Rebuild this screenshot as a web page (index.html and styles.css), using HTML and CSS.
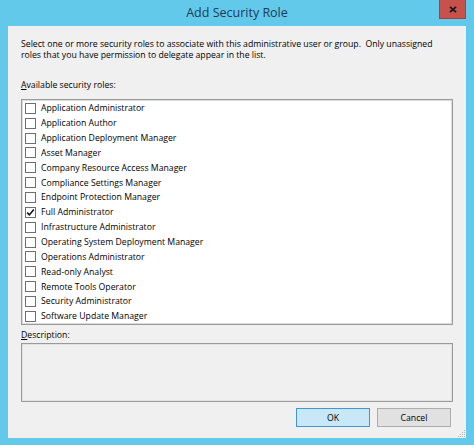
FILE: index.html
```html
<!DOCTYPE html>
<html>
<head>
<meta charset="utf-8">
<title>Add Security Role</title>
<link rel="stylesheet" href="styles.css">
</head>
<body>
<div class="window">
  <div class="titlebar">
    <span class="spacer"></span>
    <div class="title">Add Security Role</div>
    <div class="close-wrap">
      <button class="close" aria-label="Close">
        <svg width="8" height="7" viewBox="0 0 8 7"><path d="M1 0.8 L7 6.2 M7 0.8 L1 6.2" stroke="#1a1a1a" stroke-width="1.8" fill="none"/></svg>
      </button>
    </div>
  </div>
  <div class="client">
    <p class="intro">Select one or more security roles to associate with this administrative user or group.&nbsp; Only unassigned<br>roles that you have permission to delegate appear in the list.</p>
    <div class="label"><u>A</u>vailable security roles:</div>
    <ul class="list">
      <li class="item"><span class="cb"></span><span>Application Administrator</span></li>
      <li class="item"><span class="cb"></span><span>Application Author</span></li>
      <li class="item"><span class="cb"></span><span>Application Deployment Manager</span></li>
      <li class="item"><span class="cb"></span><span>Asset Manager</span></li>
      <li class="item"><span class="cb"></span><span>Company Resource Access Manager</span></li>
      <li class="item"><span class="cb"></span><span>Compliance Settings Manager</span></li>
      <li class="item"><span class="cb"></span><span>Endpoint Protection Manager</span></li>
      <li class="item"><span class="cb checked"><svg width="9" height="9" viewBox="0 0 9 9"><path d="M1.2 4.6 L3.4 6.9 L7.8 1.6" stroke="#111" stroke-width="1.6" fill="none"/></svg></span><span>Full Administrator</span></li>
      <li class="item"><span class="cb"></span><span>Infrastructure Administrator</span></li>
      <li class="item"><span class="cb"></span><span>Operating System Deployment Manager</span></li>
      <li class="item"><span class="cb"></span><span>Operations Administrator</span></li>
      <li class="item"><span class="cb"></span><span>Read-only Analyst</span></li>
      <li class="item"><span class="cb"></span><span>Remote Tools Operator</span></li>
      <li class="item"><span class="cb"></span><span>Security Administrator</span></li>
      <li class="item"><span class="cb"></span><span>Software Update Manager</span></li>
    </ul>
    <div class="label desc-label"><u>D</u>escription:</div>
    <div class="desc"></div>
    <div class="buttons">
      <button class="btn default">OK</button>
      <button class="btn">Cancel</button>
    </div>
    <svg class="grip" width="9" height="9" viewBox="0 0 9 9">
      <rect x="7" y="1" width="1" height="1" fill="#b8b8b8"/>
      <rect x="5" y="3" width="1" height="1" fill="#b8b8b8"/>
      <rect x="7" y="3" width="1" height="1" fill="#b8b8b8"/>
      <rect x="3" y="5" width="1" height="1" fill="#b8b8b8"/>
      <rect x="5" y="5" width="1" height="1" fill="#b8b8b8"/>
      <rect x="7" y="5" width="1" height="1" fill="#b8b8b8"/>
      <rect x="1" y="7" width="1" height="1" fill="#b8b8b8"/>
      <rect x="3" y="7" width="1" height="1" fill="#b8b8b8"/>
      <rect x="5" y="7" width="1" height="1" fill="#b8b8b8"/>
      <rect x="7" y="7" width="1" height="1" fill="#b8b8b8"/>
    </svg>
  </div>
</div>
</body>
</html>
```

FILE: styles.css
```css
* { box-sizing: border-box; }
html, body { margin: 0; padding: 0; }
body {
  width: 474px;
  height: 445px;
  overflow: hidden;
  font-family: "Open Sans", "Noto Sans", sans-serif;
}
.window {
  width: 474px;
  height: 445px;
  background: #62c9ea;
  padding: 0 8px 7px 8px;
  display: flex;
  flex-direction: column;
}
.titlebar {
  height: 26px;
  flex: none;
  display: grid;
  grid-template-columns: 1fr auto 1fr;
  align-items: start;
}
.title {
  font-size: 12.5px;
  line-height: 26px;
  color: #1d3b57;
  white-space: nowrap;
}
.close-wrap {
  justify-self: end;
}
.close {
  display: flex;
  align-items: center;
  justify-content: center;
  width: 27px;
  height: 19px;
  margin: 0;
  padding: 0;
  background: #c7514b;
  border: 1px solid #a3413c;
  border-top: none;
}
.client {
  flex: 1;
  position: relative;
  background: #f0f0f0;
  padding: 0 13px 0 13px;
  display: flex;
  flex-direction: column;
  font-size: 8.7px;
  color: #000;
}
.intro {
  margin: 13px 0 0 0;
  line-height: 10.5px;
  white-space: nowrap;
}
.label {
  margin-top: 19.5px;
  line-height: 11px;
}
.label u { text-decoration-thickness: 1px; text-underline-offset: 1px; }
.list {
  list-style: none;
  margin: 8.5px 0 0 0;
  padding: 1px 0 0 3px;
  height: 226px;
  background: #fff;
  border: 1px solid #9a9a9a;
  box-shadow: inset 0 0 0 1px #dcdcdc;
}
.item {
  height: 14.85px;
  display: flex;
  align-items: center;
  gap: 5px;
  white-space: nowrap;
}
.cb {
  width: 11px;
  height: 11px;
  flex: none;
  background: #fff;
  border: 1px solid #6f6f6f;
  display: flex;
  align-items: center;
  justify-content: center;
}
.desc-label {
  margin-top: 4.5px;
}
.desc {
  margin-top: 2.5px;
  height: 59px;
  background: #f0f0f0;
  border: 1px solid #9a9a9a;
  box-shadow: inset 0 0 0 1px #e2e2e2;
}
.buttons {
  margin-top: 6px;
  margin-right: 2px;
  display: flex;
  justify-content: flex-end;
  gap: 7px;
}
.btn {
  width: 74px;
  height: 19px;
  margin: 0;
  padding: 0;
  font-family: inherit;
  font-size: 8.7px;
  color: #000;
  background: #e1e1e1;
  border: 1px solid #adadad;
}
.btn.default {
  background: #c8e8f8;
  border-color: #3e98d3;
}
.grip {
  position: absolute;
  right: 0;
  bottom: 0;
}
```
